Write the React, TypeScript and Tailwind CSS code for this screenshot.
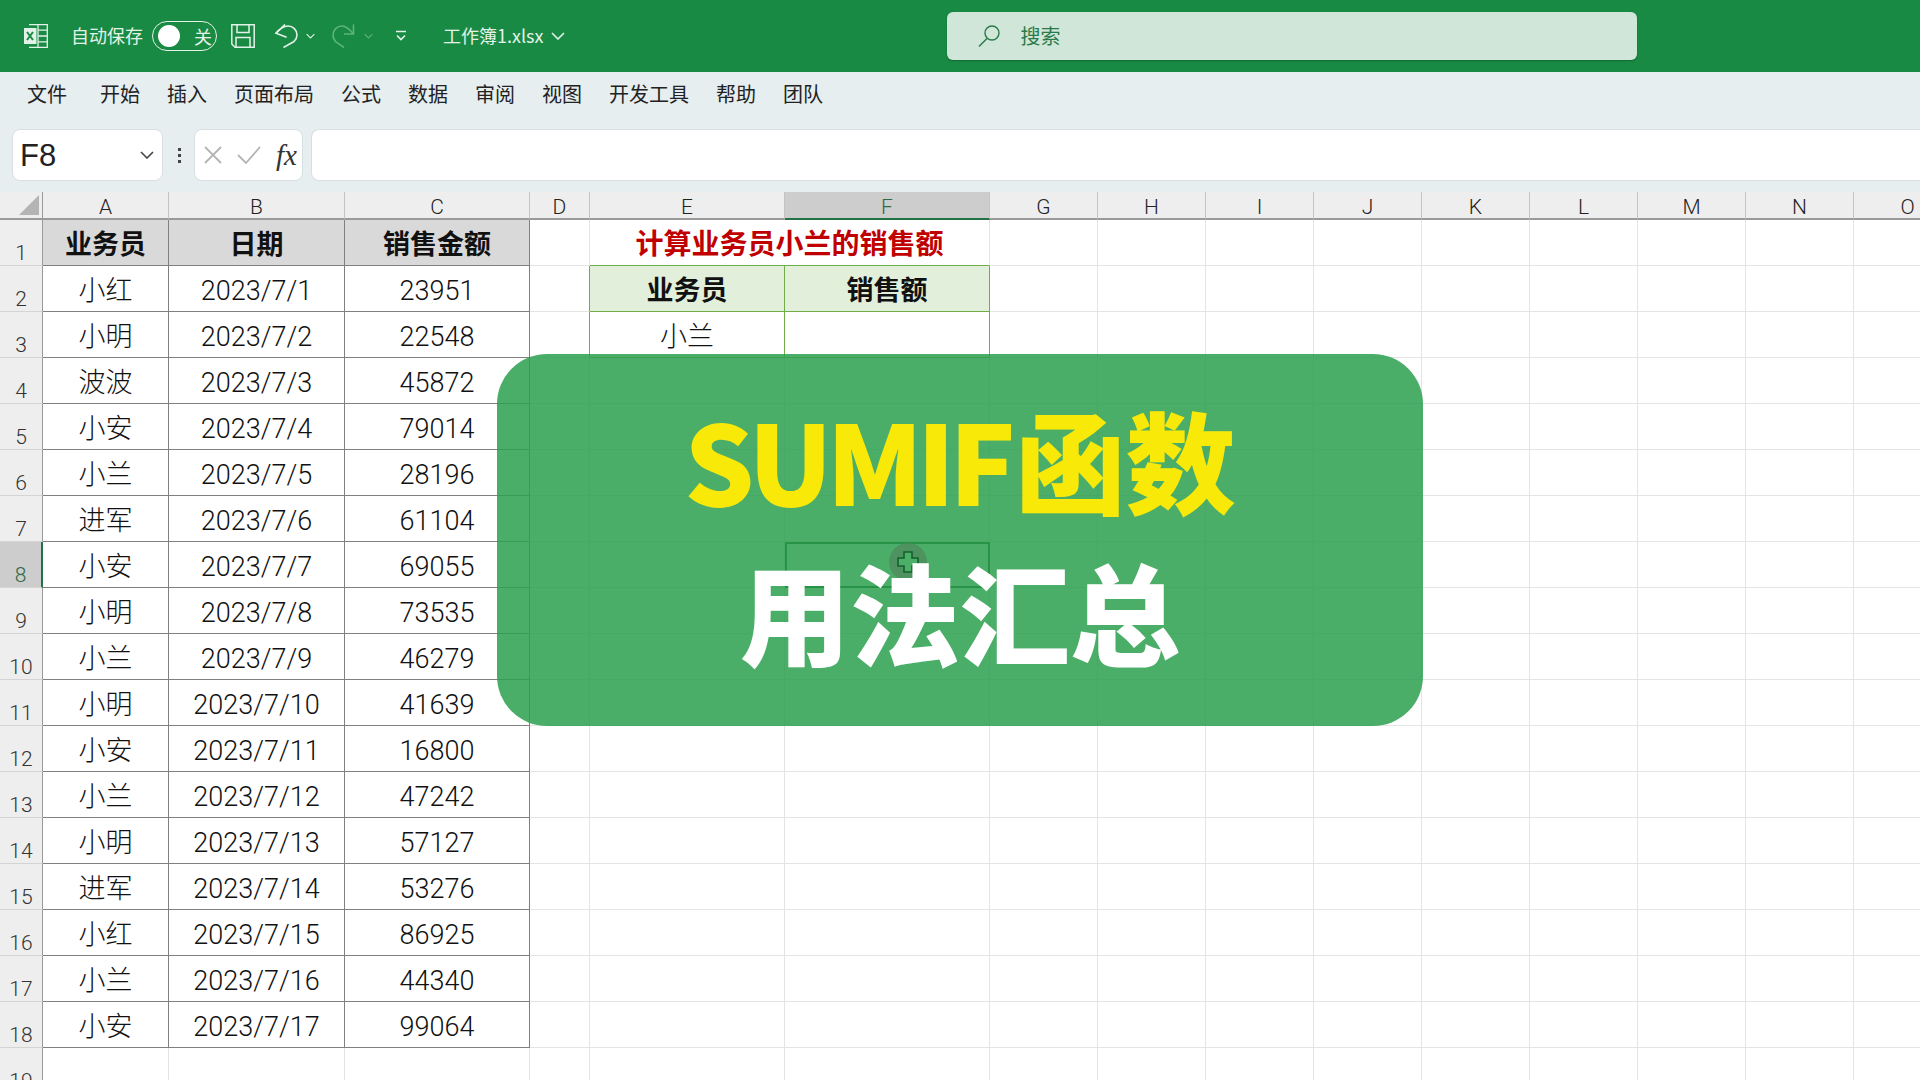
import React from "react";

const rows: [string, string, string][] = [
  ["小红", "2023/7/1", "23951"],
  ["小明", "2023/7/2", "22548"],
  ["波波", "2023/7/3", "45872"],
  ["小安", "2023/7/4", "79014"],
  ["小兰", "2023/7/5", "28196"],
  ["进军", "2023/7/6", "61104"],
  ["小安", "2023/7/7", "69055"],
  ["小明", "2023/7/8", "73535"],
  ["小兰", "2023/7/9", "46279"],
  ["小明", "2023/7/10", "41639"],
  ["小安", "2023/7/11", "16800"],
  ["小兰", "2023/7/12", "47242"],
  ["小明", "2023/7/13", "57127"],
  ["进军", "2023/7/14", "53276"],
  ["小红", "2023/7/15", "86925"],
  ["小兰", "2023/7/16", "44340"],
  ["小安", "2023/7/17", "99064"],
];

const letters = ["D", "E", "F", "G", "H", "I", "J", "K", "L", "M", "N", "O"];
const menu = ["文件", "开始", "插入", "页面布局", "公式", "数据", "审阅", "视图", "开发工具", "帮助", "团队"];
const rest = [0, 1, 2, 3, 4, 5, 6, 7, 8];

const grid = "flex items-center justify-center border-r border-b border-r-[#e4e4e4] border-b-[#e4e4e4]";
const data = "flex items-center justify-center border-r border-b border-[#808080] pt-[5px] text-[27px] font-light text-[#111]";
const head = "flex items-center justify-center border-r border-b border-[#808080] bg-[#d9d9d9] pt-[5px] text-[27px] font-bold text-[#111]";
const colHead = "flex items-center justify-center border-r border-b-2 border-r-[#c4c4c4] border-b-[#9a9a9a] bg-[#eeeeee] pt-[5px] text-[21px] font-light leading-none text-[#222]";
const rowHead = "flex items-end justify-center border-r border-b border-r-[#9a9a9a] border-b-[#d4d4d4] bg-[#eeeeee] text-[21px] font-light leading-[23px] text-[#333]";

function Chevron({ className }: { className?: string }) {
  return (
    <svg viewBox="0 0 14 8" className={className} fill="none" stroke="currentColor" strokeWidth="1.6">
      <path d="M1 1l6 6 6-6" />
    </svg>
  );
}

function XlsIcon() {
  return (
    <svg viewBox="0 0 24 24" className="h-6 w-6 text-[#e3f2e8]" fill="none" stroke="currentColor" strokeWidth="1.3">
      <path d="M5 .7h18.3v22.6H5M14 .7v22.6M14 6.2h9.3M14 12h9.3M14 17.8h9.3" />
      <rect x="0" y="4" width="12.5" height="16" fill="currentColor" stroke="none" />
      <path d="M3 8l6 8M9 8l-6 8" stroke="#198a43" strokeWidth="2" />
    </svg>
  );
}

function SaveIcon() {
  return (
    <svg viewBox="0 0 24 24" className="h-6 w-6 text-[#e3f2e8]" fill="none" stroke="currentColor" strokeWidth="1.5">
      <path d="M.8.8h22.4v22.4H4L.8 20z" />
      <path d="M6 .8v7.6h12V.8M5 23.2V13.5h14v9.7" />
    </svg>
  );
}

function UndoIcon({ className }: { className?: string }) {
  return (
    <svg viewBox="0 0 24 24" className={className} fill="none" stroke="currentColor" strokeWidth="1.6">
      <path d="M11 .5L2 9.3l10.6 4" />
      <path d="M2 9.3C6 4.5 10 2 14 2c5 0 9 4 9 9 0 3-1.5 5-3 6.5l-10.5 6" />
    </svg>
  );
}

function RedoIcon({ className }: { className?: string }) {
  return (
    <svg viewBox="0 0 24 24" className={className} fill="none" stroke="currentColor" strokeWidth="1.6">
      <path d="M21.5.5V10H12" />
      <path d="M21.5 10C17 4.5 13 2 10 2 5 2 1 6 1 11c0 3 1 5 3 7l8 5.5" />
    </svg>
  );
}

function Corner() {
  return (
    <svg viewBox="0 0 20 20" className="h-5 w-5">
      <path d="M20 0v20H0z" fill="#b4b4b4" />
    </svg>
  );
}

export default function App() {
  return (
    <div className="relative flex h-[1080px] w-[1920px] flex-col overflow-hidden bg-white font-['Noto_Sans_CJK_SC',sans-serif]">
      {/* title bar */}
      <div className="flex h-[72px] shrink-0 items-center bg-[#198a43] text-[#e3f2e8]">
        <div className="ml-6">
          <XlsIcon />
        </div>
        <span className="mb-[2px] ml-[23px] text-[18px] leading-none">自动保存</span>
        <div className="ml-[9px] flex h-[30px] w-[65px] items-center rounded-full border border-[#e3f2e8] pl-[5px]">
          <span className="h-[22px] w-[22px] rounded-full bg-white" />
          <span className="ml-[14px] text-[18px] leading-none">关</span>
        </div>
        <div className="ml-[14px]">
          <SaveIcon />
        </div>
        <UndoIcon className="ml-[19px] h-6 w-6" />
        <Chevron className="ml-2 h-[6px] w-[9px]" />
        <RedoIcon className="ml-[17px] h-6 w-6 text-[#5cb37e]" />
        <Chevron className="ml-2 h-[6px] w-[9px] text-[#5cb37e]" />
        <svg viewBox="0 0 12 12" className="ml-[22px] h-3 w-3" fill="none" stroke="currentColor" strokeWidth="1.6">
          <path d="M1 1.5h10M2 5.5l4 4 4-4" />
        </svg>
        <span className="mb-[2px] ml-[36px] text-[18px] leading-none">工作簿1.xlsx</span>
        <Chevron className="ml-2 h-2 w-[14px]" />
        <div className="ml-[382px] flex h-12 w-[690px] items-center rounded-md bg-[#cfe6d9] pl-[31px] text-[#2a7a4a] shadow-[0_1px_2px_rgba(0,0,0,0.25)]">
          <svg viewBox="0 0 22 22" className="h-[22px] w-[22px]" fill="none" stroke="currentColor" strokeWidth="1.4">
            <ellipse cx="14" cy="8" rx="7" ry="7" />
            <path d="M9 13.5L1 21.5" />
          </svg>
          <span className="ml-5 text-[20px] leading-none">搜索</span>
        </div>
      </div>

      {/* menu */}
      <div className="flex h-[57px] shrink-0 items-center gap-[27px] bg-[#e6eef0] pb-[14px] pl-[27px] text-[20px] leading-none text-[#222]">
        {menu.map((m, i) => (
          <span key={m} className={i === 1 ? "ml-[6px]" : ""}>
            {m}
          </span>
        ))}
      </div>

      {/* formula bar */}
      <div className="flex h-[63px] shrink-0 items-start bg-[#e6eef0] pl-3">
        <div className="flex h-[52px] w-[151px] items-center justify-between rounded-lg border border-[#d8dfe2] bg-white pl-[7px] pr-2 font-['Liberation_Sans',sans-serif] text-[31px] leading-none text-[#222]">
          <span>F8</span>
          <Chevron className="h-2 w-[14px] text-[#444]" />
        </div>
        <div className="ml-[13px] flex h-[52px] w-[6px] flex-col items-center justify-center gap-[3px]">
          <span className="h-[3px] w-[3px] bg-[#444]" />
          <span className="h-[3px] w-[3px] bg-[#444]" />
          <span className="h-[3px] w-[3px] bg-[#444]" />
        </div>
        <div className="ml-[12px] flex h-[52px] w-[109px] items-center rounded-lg border border-[#d8dfe2] bg-white pl-[9px] text-[#b4b4b4]">
          <svg viewBox="0 0 18 18" className="h-[18px] w-[18px]" fill="none" stroke="currentColor" strokeWidth="1.8">
            <path d="M1 1l16 16M17 1L1 17" />
          </svg>
          <svg viewBox="0 0 24 18" className="ml-[15px] h-[18px] w-6" fill="none" stroke="currentColor" strokeWidth="1.8">
            <path d="M1 9l8 8L23 1" />
          </svg>
          <span className="ml-[15px] font-['Liberation_Serif',serif] text-[29px] italic leading-none text-[#333]">fx</span>
        </div>
        <div className="ml-2 h-[52px] flex-1 rounded-l-lg border-y border-l border-[#d8dfe2] bg-white" />
      </div>

      {/* sheet */}
      <div className="flex-1 bg-white font-['Roboto','Noto_Sans_CJK_SC',sans-serif]">
        <div className="grid w-[2000px] grid-cols-[43px_126px_176px_185px_60px_195px_205px_repeat(9,108px)] grid-rows-[28px_repeat(19,46px)]">
          <div className="flex items-center justify-end border-r border-b-2 border-r-[#9a9a9a] border-b-[#9a9a9a] bg-[#eeeeee] pr-[3px]">
            <Corner />
          </div>
          <div className={colHead}>A</div>
          <div className={colHead}>B</div>
          <div className={colHead}>C</div>
          {letters.map((l) =>
            l === "F" ? (
              <div
                key={l}
                className="flex items-center justify-center border-r border-b-2 border-r-[#c4c4c4] border-b-[#217346] bg-[#cdcdcd] pt-[5px] text-[21px] font-light leading-none text-[#2f6a44]"
              >
                {l}
              </div>
            ) : (
              <div key={l} className={colHead}>
                {l}
              </div>
            )
          )}

          {/* row 1 */}
          <div className={rowHead}>1</div>
          <div className={head}>业务员</div>
          <div className={head}>日期</div>
          <div className={head}>销售金额</div>
          <div className="border-r border-b border-r-[#e4e4e4] border-b-[#e4e4e4]" />
          <div className="col-span-2 flex items-center justify-center border-r border-b border-r-[#e4e4e4] border-b-[#70ad47] pt-[5px] text-[28px] font-bold text-[#c00000]">
            计算业务员小兰的销售额
          </div>
          {rest.map((k) => (
            <div key={k} className={grid} />
          ))}

          {/* data rows */}
          {rows.map((r, idx) => {
            const n = idx + 2;
            return (
              <React.Fragment key={n}>
                {n === 8 ? (
                  <div className="flex items-end justify-center border-r-2 border-b border-r-[#217346] border-b-[#d4d4d4] bg-[#cdcdcd] text-[21px] font-light leading-[23px] text-[#2f6a44]">
                    {n}
                  </div>
                ) : (
                  <div className={rowHead}>{n}</div>
                )}
                <div className={data}>{r[0]}</div>
                <div className={data}>{r[1]}</div>
                <div className={data}>{r[2]}</div>
                {n === 2 || n === 3 ? (
                  <div className="border-r border-b border-r-[#70ad47] border-b-[#e4e4e4]" />
                ) : (
                  <div className={grid} />
                )}
                {n === 2 ? (
                  <>
                    <div className="flex items-center justify-center border-r border-b border-[#70ad47] bg-[#e2efda] pt-[5px] text-[27px] font-bold text-[#111]">
                      业务员
                    </div>
                    <div className="flex items-center justify-center border-r border-b border-[#70ad47] bg-[#e2efda] pt-[5px] text-[27px] font-bold text-[#111]">
                      销售额
                    </div>
                  </>
                ) : n === 3 ? (
                  <>
                    <div className="flex items-center justify-center border-r border-b border-[#70ad47] pt-[5px] text-[27px] font-light text-[#111]">
                      小兰
                    </div>
                    <div className="border-r border-b border-[#70ad47]" />
                  </>
                ) : n === 8 ? (
                  <>
                    <div className={grid} />
                    <div className="border-2 border-[#0b4a1f]" />
                  </>
                ) : (
                  <>
                    <div className={grid} />
                    <div className={grid} />
                  </>
                )}
                {rest.map((k) => (
                  <div key={k} className={grid} />
                ))}
              </React.Fragment>
            );
          })}

          {/* row 19 */}
          <div className={rowHead}>19</div>
          {[0, 1, 2, 3, 4, 5, 6, 7, 8, 9, 10, 11, 12, 13, 14].map((k) => (
            <div key={k} className={grid} />
          ))}
        </div>
      </div>

      {/* title overlay */}
      <div className="absolute left-[497px] top-[354px] flex h-[372px] w-[926px] flex-col items-center justify-center rounded-[50px] bg-[#2ba04e]/85 pb-[12px] font-['Noto_Sans_CJK_SC',sans-serif] text-[110px] font-black">
        <svg viewBox="0 0 38 38" className="absolute left-[392px] top-[189px] h-[38px] w-[38px]">
          <circle cx="19" cy="19" r="19" fill="#4f8a5c" fillOpacity="0.75" />
          <path
            d="M15 9h8v6h6v8h-6v6h-8v-6H9v-8h6z"
            fill="#4caf68"
            stroke="#14602e"
            strokeWidth="1.6"
          />
        </svg>
        <div className="relative h-[152px] leading-[152px] text-[#f9e909]">
          <span className="tracking-[-6px]">SUMIF</span>
          <span className="ml-[6px]">函数</span>
        </div>
        <div className="relative h-[152px] leading-[152px] text-white">用法汇总</div>
      </div>
    </div>
  );
}
